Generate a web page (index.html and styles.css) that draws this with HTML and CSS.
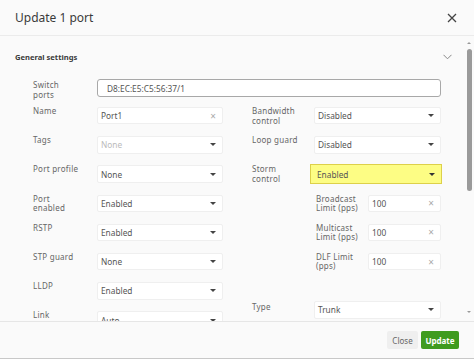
FILE: index.html
```html
<!DOCTYPE html>
<html>
<head>
<meta charset="utf-8">
<link rel="stylesheet" href="styles.css">
</head>
<body>
<div class="modal">
  <div class="header">
    <span class="title">Update 1 port</span>
    <svg class="close-x" width="10" height="10" viewBox="0 0 10 10"><path d="M1 1L9 9M9 1L1 9" stroke="#444" stroke-width="1.3" fill="none"/></svg>
  </div>
  <div class="body">
    <div class="content">
      <div class="section-head">
        <span>General settings</span>
        <svg width="9" height="6" viewBox="0 0 9 6"><path d="M0.5 0.8L4.5 4.8L8.5 0.8" stroke="#888" stroke-width="1" fill="none"/></svg>
      </div>
      <div class="form">
        <div class="row full">
          <div class="label">Switch<br>ports</div>
          <div class="ctl outlined">D8:EC:E5:C5:56:37/1</div>
        </div>
        <div class="cols">
          <div class="col left">
            <div class="row"><div class="label">Name</div><div class="ctl"><span>Port1</span><span class="clear">×</span></div></div>
            <div class="row"><div class="label">Tags</div><div class="ctl"><span class="ph">None</span><span class="caret"></span></div></div>
            <div class="row"><div class="label">Port profile</div><div class="ctl"><span>None</span><span class="caret"></span></div></div>
            <div class="row"><div class="label">Port<br>enabled</div><div class="ctl"><span>Enabled</span><span class="caret"></span></div></div>
            <div class="row"><div class="label">RSTP</div><div class="ctl"><span>Enabled</span><span class="caret"></span></div></div>
            <div class="row"><div class="label">STP guard</div><div class="ctl"><span>None</span><span class="caret"></span></div></div>
            <div class="row"><div class="label">LLDP</div><div class="ctl"><span>Enabled</span><span class="caret"></span></div></div>
            <div class="row"><div class="label">Link</div><div class="ctl"><span>Auto</span><span class="caret"></span></div></div>
          </div>
          <div class="col right">
            <div class="row"><div class="label">Bandwidth<br>control</div><div class="ctl"><span>Disabled</span><span class="caret"></span></div></div>
            <div class="row"><div class="label">Loop guard</div><div class="ctl"><span>Disabled</span><span class="caret"></span></div></div>
            <div class="row"><div class="label">Storm<br>control</div><div class="ctl hl"><span>Enabled</span><span class="caret dark"></span></div></div>
            <div class="row sub"><div class="label">Broadcast<br>Limit (pps)</div><div class="ctl"><span>100</span><span class="clear">×</span></div></div>
            <div class="row sub"><div class="label">Multicast<br>Limit (pps)</div><div class="ctl"><span>100</span><span class="clear">×</span></div></div>
            <div class="row sub"><div class="label">DLF Limit<br>(pps)</div><div class="ctl"><span>100</span><span class="clear">×</span></div></div>
            <div class="row type"><div class="label">Type</div><div class="ctl"><span>Trunk</span><span class="caret"></span></div></div>
          </div>
        </div>
      </div>
    </div>
    <div class="scrollbar">
      <span class="arrow up"></span>
      <span class="thumb"></span>
      <span class="arrow down"></span>
    </div>
  </div>
  <div class="footer">
    <button class="btn close">Close</button>
    <button class="btn update">Update</button>
  </div>
</div>
</body>
</html>
```

FILE: styles.css
```css
* { box-sizing: border-box; }
html, body { margin: 0; padding: 0; background: #ffffff; }
body { font-family: "Noto Sans", "DejaVu Sans", sans-serif; color: #555; }

.modal {
  width: 474px;
  height: 359px;
  background: #fafafa;
  border-bottom: 1px solid #c8c8c8;
  display: flex;
  flex-direction: column;
}

.header {
  height: 36px;
  flex: none;
  border-bottom: 1px solid #ebebeb;
  display: flex;
  align-items: center;
  justify-content: space-between;
  padding: 0 17px 0 15px;
}
.title { font-size: 12px; color: #3a3a3a; }
.close-x { display: block; }

.body {
  flex: 1;
  display: flex;
  overflow: hidden;
  min-height: 0;
}
.content {
  flex: 1;
  padding: 14px 13px 0 15px;
  overflow: hidden;
}
.section-head {
  height: 14px;
  display: flex;
  align-items: center;
  justify-content: space-between;
  font-size: 7.6px;
  font-weight: bold;
  color: #3a3a3a;
}
.section-head svg { display: block; }

.form { padding-left: 18px; margin-top: 15px; }
.row { display: flex; align-items: flex-start; height: 17.4px; }
.label {
  font-size: 8px;
  line-height: 9.5px;
  letter-spacing: 0.25px;
  color: #666;
  margin-top: -1px;
  flex: none;
  white-space: nowrap;
}
.ctl {
  height: 17.4px;
  background: #fff;
  border: 1px solid #efefef;
  border-radius: 2px;
  display: flex;
  align-items: center;
  justify-content: space-between;
  padding: 0 6px 0 3px;
  font-size: 8.3px;
  color: #555;
  flex: none;
}
.ctl .ph { color: #bbb; }
.ctl .clear { color: #aaa; font-size: 10px; line-height: 1; }
.caret {
  width: 0; height: 0;
  border-left: 3px solid transparent;
  border-right: 3px solid transparent;
  border-top: 3px solid #444;
}
.caret.dark { border-top-color: #333; }

.row.full { height: 18px; }
.row.full .label { width: 64px; margin-top: 1px; }
.ctl.outlined {
  width: 344px;
  height: 18px;
  border: 1px solid #a8a8a8;
  border-radius: 3px;
  padding-left: 9px;
  justify-content: flex-start;
}

.cols { display: flex; gap: 29px; margin-top: 10px; }
.col { display: flex; flex-direction: column; gap: 11.8px; }
.col.left { width: 190px; }
.col.left .label { width: 64px; }
.col.left .ctl { width: 126px; }
.col.right { width: 189px; }
.col.right .label { width: 62px; }
.col.right .ctl { width: 127px; }

.ctl.hl {
  background: #fdfd84;
  border: 1px solid #ddd04a;
  margin: -1px 0 0 -4px;
  width: 132px !important;
  height: 19.4px;
  padding-left: 6px;
  border-radius: 0;
}
.row.sub { padding-left: 64px; }
.col.right .row.sub .label { width: 52px; }
.col.right .row.sub .ctl { width: 73px; }
.row.type { margin-top: 19px; }
.row.type .label { margin-top: 1px; }

.scrollbar {
  width: 8px;
  margin-right: 1px;
  display: flex;
  flex-direction: column;
  align-items: center;
}
.arrow { width: 0; height: 0; border-left: 2px solid transparent; border-right: 2px solid transparent; }
.arrow.up { border-bottom: 2px solid #999; margin-top: 6px; }
.arrow.down { border-top: 2px solid #999; margin-top: 120px; }
.thumb { width: 5px; height: 142px; background: #9a9a9a; border-radius: 3px; margin-top: 5px; }

.footer {
  height: 37px;
  flex: none;
  border-top: 1px solid #e6e6e6;
  display: flex;
  align-items: center;
  justify-content: flex-end;
  gap: 3px;
  padding-right: 15px;
}
.btn {
  height: 18px;
  border: none;
  border-radius: 2px;
  font-family: inherit;
  font-size: 8px;
  padding: 0;
}
.btn.close { width: 31px; background: #efefef; color: #666; }
.btn.update { width: 38px; background: #3f9b1f; color: #fff; font-weight: bold; }
```
